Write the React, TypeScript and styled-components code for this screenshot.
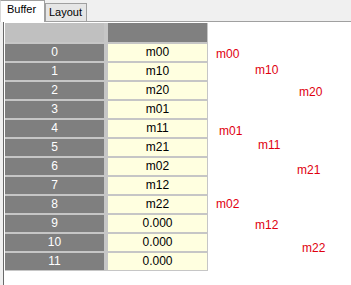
import React from "react";
import styled, { createGlobalStyle } from "styled-components";

const GlobalStyle = createGlobalStyle`
  html, body {
    margin: 0;
    padding: 0;
    background: #f0f0f0;
  }
`;

const Window = styled.div`
  width: 351px;
  height: 285px;
  overflow: hidden;
  display: flex;
  flex-direction: column;
  background: #f0f0f0;
  font-family: "Liberation Sans", Arial, sans-serif;
`;

const TabStrip = styled.div`
  display: flex;
  align-items: flex-end;
  height: 21px;
  flex-shrink: 0;
`;

const Tab = styled.div<{ $active?: boolean }>`
  box-sizing: border-box;
  width: ${(p) => (p.$active ? "45px" : "42px")};
  height: ${(p) => (p.$active ? "22px" : "18px")};
  margin-bottom: ${(p) => (p.$active ? "-1px" : "0")};
  position: relative;
  z-index: ${(p) => (p.$active ? 1 : 0)};
  padding: 2px 0 0 ${(p) => (p.$active ? "6px" : "3px")};
  border: 1px solid #a0a0a0;
  border-bottom: none;
  border-left-color: ${(p) => (p.$active ? "#d8d8d8" : "#a0a0a0")};
  background: ${(p) => (p.$active ? "#ffffff" : "#e6e6e6")};
  font-size: 11px;
  line-height: 13px;
  color: #000;
  cursor: default;
`;

const Body = styled.div`
  flex: 1;
  display: flex;
  border-top: 1px solid #a0a0a0;
  padding-left: 3px;
`;

const Page = styled.div`
  flex: 1;
  display: flex;
  align-items: flex-start;
  background: #ffffff;
  border-left: 1px solid #6a6a6a;
  padding: 1px 0 0 1px;
`;

const Grid = styled.div`
  display: grid;
  grid-template-columns: 99px 99px;
  grid-template-rows: 19px;
  grid-auto-rows: 17px;
  column-gap: 4px;
  row-gap: 2px;
  padding: 0 1px 1px 0;
  background: #c6c6c6;
  font-size: 12px;
`;

const HeadCell = styled.div<{ $dark?: boolean }>`
  background: ${(p) => (p.$dark ? "#808080" : "#c0c0c0")};
`;

const IndexCell = styled.div`
  background: #7f7f7f;
  color: #ffffff;
  text-align: center;
  line-height: 17px;
`;

const ValueCell = styled.div`
  background: #ffffe0;
  color: #000000;
  text-align: center;
  line-height: 17px;
`;

const Diagram = styled.div`
  flex: 1;
  position: relative;
  height: 250px;
`;

const Label = styled.span`
  position: absolute;
  font-size: 12px;
  line-height: 14px;
  color: #e0000f;
  white-space: nowrap;
`;

const values = [
  "m00", "m10", "m20", "m01", "m11", "m21",
  "m02", "m12", "m22", "0.000", "0.000", "0.000",
];

const labels = [
  { text: "m00", x: 8, y: 24 },
  { text: "m10", x: 47, y: 40 },
  { text: "m20", x: 91, y: 62 },
  { text: "m01", x: 11, y: 101 },
  { text: "m11", x: 50, y: 115 },
  { text: "m21", x: 89, y: 140 },
  { text: "m02", x: 8, y: 174 },
  { text: "m12", x: 47, y: 195 },
  { text: "m22", x: 94, y: 218 },
];

export default function App() {
  return (
    <Window>
      <GlobalStyle />
      <TabStrip>
        <Tab $active>Buffer</Tab>
        <Tab>Layout</Tab>
      </TabStrip>
      <Body>
        <Page>
          <Grid>
            <HeadCell />
            <HeadCell $dark />
            {values.map((v, i) => (
              <React.Fragment key={i}>
                <IndexCell>{i}</IndexCell>
                <ValueCell>{v}</ValueCell>
              </React.Fragment>
            ))}
          </Grid>
          <Diagram>
            {labels.map((l) => (
              <Label key={l.text} style={{ left: l.x, top: l.y }}>
                {l.text}
              </Label>
            ))}
          </Diagram>
        </Page>
      </Body>
    </Window>
  );
}
